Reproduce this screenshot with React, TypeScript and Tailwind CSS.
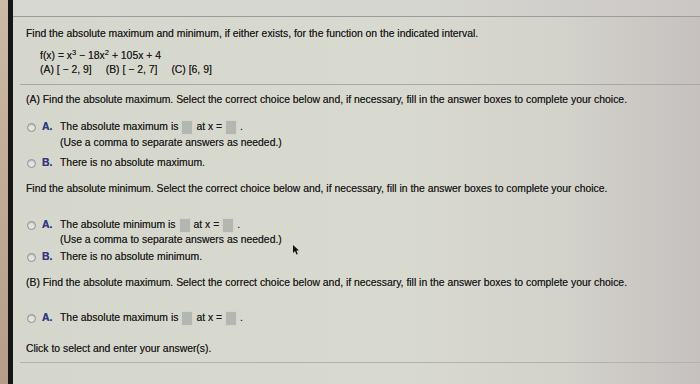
import React from "react";

const font = { fontFamily: '"Liberation Sans", Arial, sans-serif' };

function Box() {
  return (
    <span className="inline-block w-[12px] h-[15px] align-middle bg-[#b4b7b1] border border-[#d2d4ce] mx-[3px]" />
  );
}

function Radio() {
  return (
    <span className="inline-block w-[9px] h-[9px] rounded-full border border-[#8e9195] bg-[#e2e3e0] shadow-[inset_0_1px_1px_rgba(0,0,0,0.2)]" />
  );
}

function Choice({
  letter,
  children,
  className = "",
}: {
  letter: string;
  children: React.ReactNode;
  className?: string;
}) {
  return (
    <div className={`flex items-center h-[14px] ${className}`}>
      <span className="w-[15px] flex items-center">
        <Radio />
      </span>
      <span className="w-[18px] text-[#2f3889] font-bold">{letter}.</span>
      <span className="flex items-center">{children}</span>
    </div>
  );
}

export default function App() {
  return (
    <div
      className="w-[700px] h-[384px] flex overflow-hidden text-[10.4px] leading-[14px] text-[#1d1d1d] [text-shadow:0_0_0.5px_rgba(0,0,0,0.6)]"
      style={font}
    >
      <div className="w-[8px] bg-gradient-to-b from-[#cdb9a4] via-[#c2ab95] to-[#b59d88]" />
      <div className="w-[5px] bg-[#17141a]" />
      <div className="flex-1 flex flex-col bg-[linear-gradient(to_right,#d5d6cc_0%,#d9dacf_55%,#d3d2cb_80%,#c6c1bf_100%)]">
        <div className="h-[17px] border-b border-[#9c9d9a] bg-[linear-gradient(to_right,#d7d8d2_0%,#d6d6d0_60%,#cbc7c5_100%)]" />
        <div className="pl-[7px] flex flex-col">
          <div className="pl-[6px] mt-[10px]">
            Find the absolute maximum and minimum, if either exists, for the
            function on the indicated interval.
          </div>
          <div className="pl-[20px] mt-[8px]">
            f(x) = x<sup className="text-[7.5px]">3</sup> − 18x
            <sup className="text-[7.5px]">2</sup> + 105x + 4
          </div>
          <div className="pl-[20px] flex gap-[14px]">
            <span>(A) [ − 2, 9]</span>
            <span>(B) [ − 2, 7]</span>
            <span>(C) [6, 9]</span>
          </div>
          <div className="border-b border-[#a7a8a3] mt-[7px]" />
          <div className="pl-[6px] mt-[8px]">
            (A) Find the absolute maximum. Select the correct choice below and,
            if necessary, fill in the answer boxes to complete your choice.
          </div>
          <div className="pl-[7px] flex flex-col">
            <Choice letter="A" className="mt-[13px]">
              The absolute maximum is
              <Box />
              at x =
              <Box />.
            </Choice>
            <div className="pl-[33px] mt-[2px]">
              (Use a comma to separate answers as needed.)
            </div>
            <Choice letter="B" className="mt-[6px]">
              There is no absolute maximum.
            </Choice>
          </div>
          <div className="pl-[6px] mt-[12px]">
            Find the absolute minimum. Select the correct choice below and, if
            necessary, fill in the answer boxes to complete your choice.
          </div>
          <div className="pl-[7px] flex flex-col relative">
            <Choice letter="A" className="mt-[22px]">
              The absolute minimum is
              <Box />
              at x =
              <Box />.
            </Choice>
            <div className="pl-[33px] mt-[1px]">
              (Use a comma to separate answers as needed.)
            </div>
            <Choice letter="B" className="mt-[3px]">
              There is no absolute minimum.
            </Choice>
            <svg
              className="absolute left-[273px] top-[49px]"
              width="7"
              height="10"
              viewBox="0 0 7 10"
            >
              <path d="M0 0 L0 8 L2 6 L3.5 9.5 L4.8 9 L3.4 5.6 L6 5.6 Z" fill="#111" />
            </svg>
          </div>
          <div className="pl-[6px] mt-[12px]">
            (B) Find the absolute maximum. Select the correct choice below and,
            if necessary, fill in the answer boxes to complete your choice.
          </div>
          <div className="pl-[7px] flex flex-col">
            <Choice letter="A" className="mt-[21px]">
              The absolute maximum is
              <Box />
              at x =
              <Box />.
            </Choice>
          </div>
          <div className="pl-[6px] mt-[17px]">
            Click to select and enter your answer(s).
          </div>
          <div className="border-b border-[#b1b1ad] mt-[6px]" />
        </div>
      </div>
    </div>
  );
}
